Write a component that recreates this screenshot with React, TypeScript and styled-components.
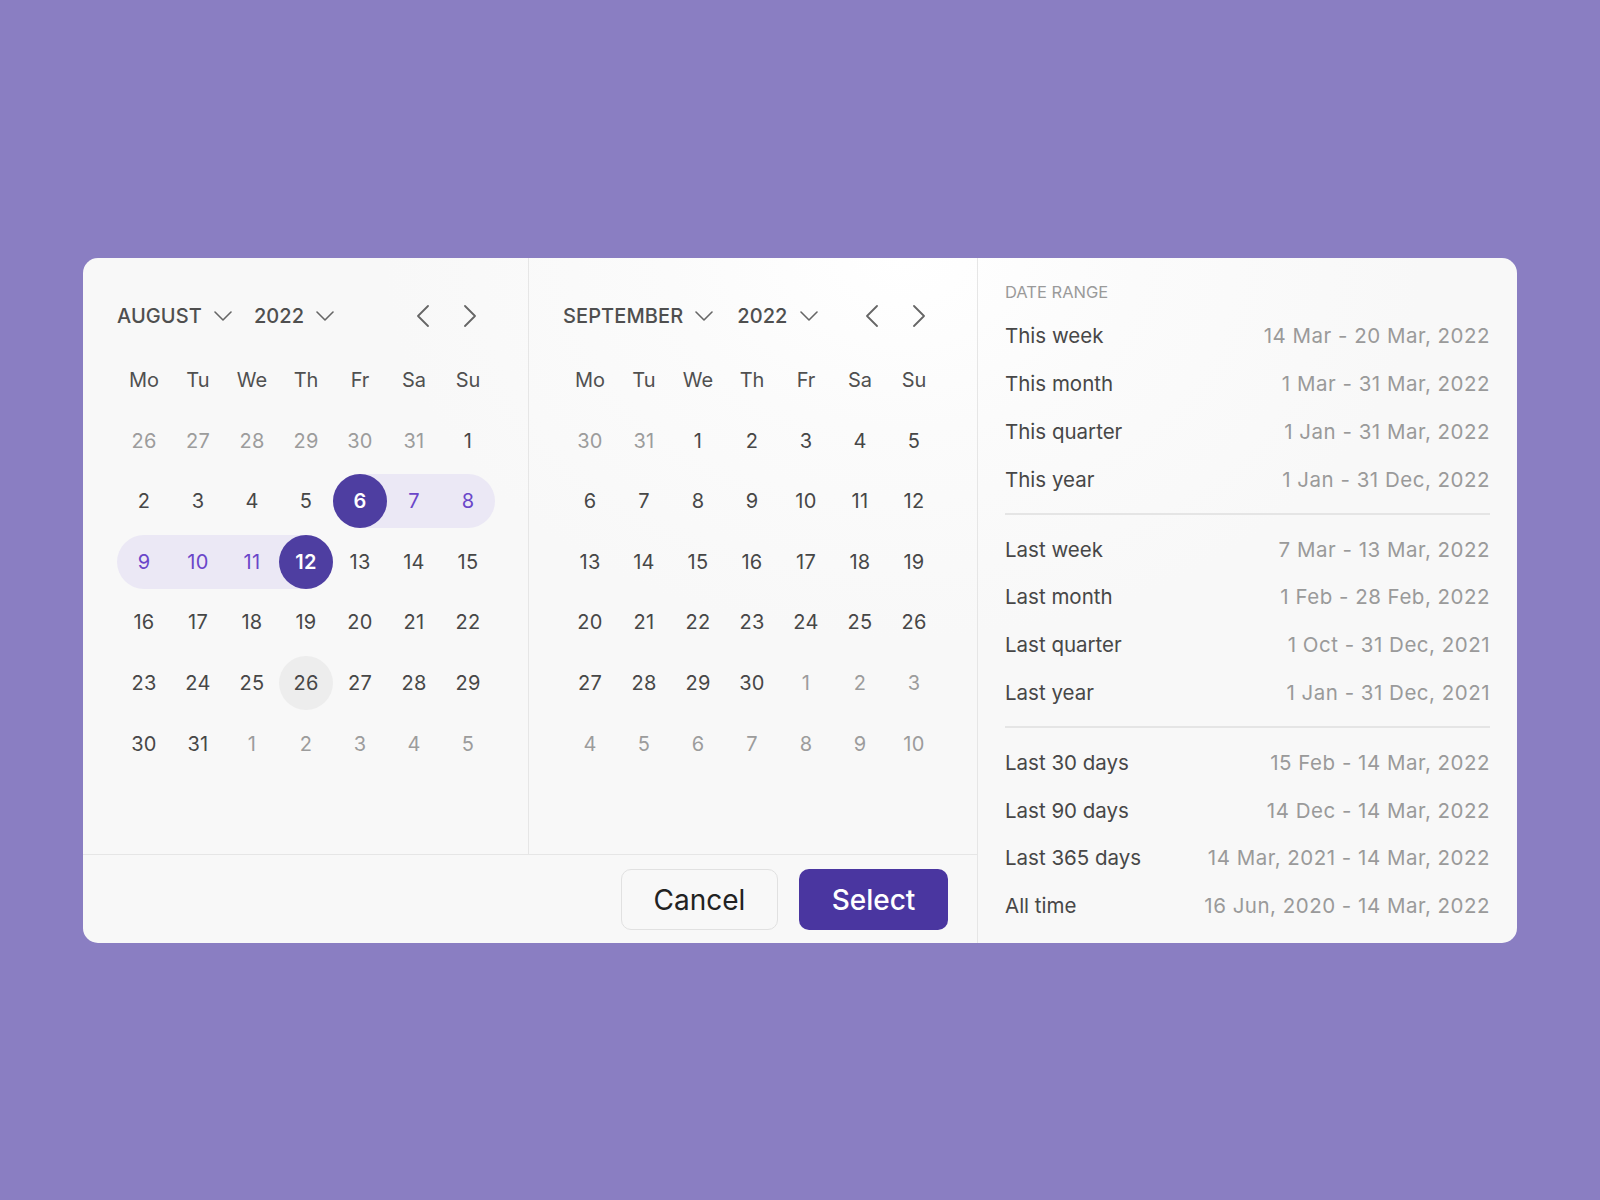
import React from "react";
import styled, { createGlobalStyle } from "styled-components";

const GlobalStyle = createGlobalStyle`
  html, body { margin: 0; padding: 0; }
  body {
    background: #8a7ec2;
    font-family: Inter, "Noto Sans", "Liberation Sans", sans-serif;
    -webkit-font-smoothing: antialiased;
  }
  * { box-sizing: border-box; }
`;

const Page = styled.div`
  min-height: 100vh;
  display: flex;
  align-items: center;
  justify-content: center;
`;

const Card = styled.div`
  width: 1434px;
  height: 685px;
  border-radius: 15px;
  overflow: hidden;
  display: flex;
  background: radial-gradient(ellipse 520px 380px at 820px 0px, #ffffff 0%, #fbfbfb 45%, #f8f8f8 100%);
`;

const LeftPart = styled.div`
  width: 894px;
  display: flex;
  flex-direction: column;
`;

const Calendars = styled.div`
  height: 596px;
  display: flex;
`;

const CalPanel = styled.div<{ $divider?: boolean }>`
  width: ${(p) => (p.$divider ? "446px" : "448px")};
  padding: 38px 34px 0 34px;
  border-right: ${(p) => (p.$divider ? "1px solid #e6e6e6" : "none")};
  display: flex;
  flex-direction: column;
`;

const Header = styled.div`
  height: 40px;
  display: flex;
  align-items: center;
  padding-right: 8px;
  margin-bottom: 17.5px;
`;

const Select = styled.div<{ $gap?: number }>`
  display: flex;
  align-items: center;
  gap: 12px;
  margin-right: ${(p) => p.$gap ?? 22}px;
  font-size: 20px;
  font-weight: 500;
  color: #4f4f4f;
  letter-spacing: 0.1px;
`;

const Nav = styled.div`
  margin-left: auto;
  display: flex;
  gap: 15px;
`;

const NavButton = styled.div`
  width: 32px;
  height: 32px;
  display: flex;
  align-items: center;
  justify-content: center;
`;

const Grid = styled.div`
  display: grid;
  grid-template-columns: repeat(7, 54px);
  grid-auto-rows: 54px;
  row-gap: 6.6px;
`;

const WeekDay = styled.div`
  display: flex;
  align-items: center;
  justify-content: center;
  font-size: 20px;
  color: #505050;
`;

type RangeKind = "none" | "start" | "mid" | "end";

const Cell = styled.div<{ $range: RangeKind; $rowStart: boolean; $rowEnd: boolean }>`
  display: flex;
  align-items: center;
  justify-content: center;
  background: ${(p) => (p.$range === "none" ? "transparent" : "#ebe8f5")};
  border-top-left-radius: ${(p) =>
    p.$range !== "none" && (p.$range === "start" || p.$rowStart) ? "27px" : "0"};
  border-bottom-left-radius: ${(p) =>
    p.$range !== "none" && (p.$range === "start" || p.$rowStart) ? "27px" : "0"};
  border-top-right-radius: ${(p) =>
    p.$range !== "none" && (p.$range === "end" || p.$rowEnd) ? "27px" : "0"};
  border-bottom-right-radius: ${(p) =>
    p.$range !== "none" && (p.$range === "end" || p.$rowEnd) ? "27px" : "0"};
`;

const Day = styled.span<{ $muted: boolean; $selected: boolean; $today: boolean; $inRange: boolean }>`
  width: 54px;
  height: 54px;
  border-radius: 50%;
  display: flex;
  align-items: center;
  justify-content: center;
  font-size: 20px;
  letter-spacing: 0.3px;
  font-weight: ${(p) => (p.$selected ? 600 : 400)};
  background: ${(p) => (p.$selected ? "#4e3ea1" : p.$today ? "#ededed" : "transparent")};
  color: ${(p) =>
    p.$selected ? "#ffffff" : p.$inRange ? "#6a46c9" : p.$muted ? "#9c9c9c" : "#474747"};
`;

const Footer = styled.div`
  flex: 1;
  border-top: 1px solid #e6e6e6;
  display: flex;
  align-items: center;
  justify-content: flex-end;
  gap: 21px;
  padding: 2px 29px 0 0;
`;

const Button = styled.button<{ $primary?: boolean }>`
  height: 61px;
  width: ${(p) => (p.$primary ? "149px" : "157px")};
  border-radius: 10px;
  font-family: Inter, "Noto Sans", "Liberation Sans", sans-serif;
  font-size: 28px;
  font-weight: ${(p) => (p.$primary ? 500 : 400)};
  color: ${(p) => (p.$primary ? "#ffffff" : "#222222")};
  background: ${(p) => (p.$primary ? "#4a36a0" : "#f8f8f8")};
  border: ${(p) => (p.$primary ? "none" : "1.5px solid #e1e1e1")};
  cursor: pointer;
`;

const RightPanel = styled.div`
  flex: 1;
  border-left: 1px solid #e6e6e6;
  padding: 23px 27px 0 27px;
  display: flex;
  flex-direction: column;
`;

const PanelTitle = styled.div`
  font-size: 16.5px;
  color: #9a9a9a;
  height: 22px;
  line-height: 22px;
  margin-bottom: 9.5px;
`;

const RangeRow = styled.div`
  height: 47.8px;
  display: flex;
  align-items: center;
  justify-content: space-between;
  font-size: 20.5px;
`;

const RangeLabel = styled.span`
  color: #474747;
`;

const RangeValue = styled.span`
  color: #9a9a9a;
  letter-spacing: 0.5px;
`;

const Divider = styled.div`
  height: 1.5px;
  background: #e5e5e5;
  margin: 10px 0 10.5px 0;
`;

const Chevron = () => (
  <svg width="18" height="10" viewBox="0 0 18 10" fill="none">
    <path d="M1 1l8 8 8-8" stroke="#666" strokeWidth="1.6" strokeLinecap="round" strokeLinejoin="round" />
  </svg>
);

const Arrow = ({ dir }: { dir: "left" | "right" }) => (
  <svg width="12" height="22" viewBox="0 0 12 22" fill="none">
    <path
      d={dir === "left" ? "M11 1L1 11l10 10" : "M1 1l10 10L1 21"}
      stroke="#666"
      strokeWidth="1.8"
      strokeLinecap="round"
      strokeLinejoin="round"
    />
  </svg>
);

type DayData = { n: number; muted?: boolean; range?: RangeKind; selected?: boolean; today?: boolean };

const WEEKDAYS = ["Mo", "Tu", "We", "Th", "Fr", "Sa", "Su"];

const seq = (a: number, b: number, muted = false): DayData[] => {
  const r: DayData[] = [];
  for (let i = a; i <= b; i++) r.push({ n: i, muted });
  return r;
};

const august: DayData[] = [
  ...seq(26, 31, true),
  { n: 1 },
  ...seq(2, 5),
  { n: 6, range: "start", selected: true },
  { n: 7, range: "mid" },
  { n: 8, range: "mid" },
  { n: 9, range: "mid" },
  { n: 10, range: "mid" },
  { n: 11, range: "mid" },
  { n: 12, range: "end", selected: true },
  ...seq(13, 25),
  { n: 26, today: true },
  ...seq(27, 31),
  ...seq(1, 5, true),
];

const september: DayData[] = [
  ...seq(30, 31, true),
  ...seq(1, 30),
  ...seq(1, 3, true),
  ...seq(4, 10, true),
];

const MonthCalendar = ({
  month,
  monthGap,
  days,
  divider,
}: {
  month: string;
  monthGap: number;
  days: DayData[];
  divider?: boolean;
}) => (
  <CalPanel $divider={divider}>
    <Header>
      <Select $gap={monthGap}>
        {month}
        <Chevron />
      </Select>
      <Select>
        2022
        <Chevron />
      </Select>
      <Nav>
        <NavButton>
          <Arrow dir="left" />
        </NavButton>
        <NavButton>
          <Arrow dir="right" />
        </NavButton>
      </Nav>
    </Header>
    <Grid>
      {WEEKDAYS.map((w) => (
        <WeekDay key={w}>{w}</WeekDay>
      ))}
      {days.map((d, i) => {
        const range = d.range ?? "none";
        return (
          <Cell key={i} $range={range} $rowStart={i % 7 === 0} $rowEnd={i % 7 === 6}>
            <Day
              $muted={!!d.muted}
              $selected={!!d.selected}
              $today={!!d.today}
              $inRange={range !== "none"}
            >
              {d.n}
            </Day>
          </Cell>
        );
      })}
    </Grid>
  </CalPanel>
);

const sections: [string, string][][] = [
  [
    ["This week", "14 Mar - 20 Mar, 2022"],
    ["This month", "1 Mar - 31 Mar, 2022"],
    ["This quarter", "1 Jan - 31 Mar, 2022"],
    ["This year", "1 Jan - 31 Dec, 2022"],
  ],
  [
    ["Last week", "7 Mar - 13 Mar, 2022"],
    ["Last month", "1 Feb - 28 Feb, 2022"],
    ["Last quarter", "1 Oct - 31 Dec, 2021"],
    ["Last year", "1 Jan - 31 Dec, 2021"],
  ],
  [
    ["Last 30 days", "15 Feb - 14 Mar, 2022"],
    ["Last 90 days", "14 Dec - 14 Mar, 2022"],
    ["Last 365 days", "14 Mar, 2021 - 14 Mar, 2022"],
    ["All time", "16 Jun, 2020 - 14 Mar, 2022"],
  ],
];

export default function App() {
  return (
    <>
      <GlobalStyle />
      <Page>
        <Card>
          <LeftPart>
            <Calendars>
              <MonthCalendar month="AUGUST" monthGap={22} days={august} divider />
              <MonthCalendar month="SEPTEMBER" monthGap={24} days={september} />
            </Calendars>
            <Footer>
              <Button>Cancel</Button>
              <Button $primary>Select</Button>
            </Footer>
          </LeftPart>
          <RightPanel>
            <PanelTitle>DATE RANGE</PanelTitle>
            {sections.map((sec, si) => (
              <React.Fragment key={si}>
                {si > 0 && <Divider />}
                {sec.map(([l, v]) => (
                  <RangeRow key={l}>
                    <RangeLabel>{l}</RangeLabel>
                    <RangeValue>{v}</RangeValue>
                  </RangeRow>
                ))}
              </React.Fragment>
            ))}
          </RightPanel>
        </Card>
      </Page>
    </>
  );
}
